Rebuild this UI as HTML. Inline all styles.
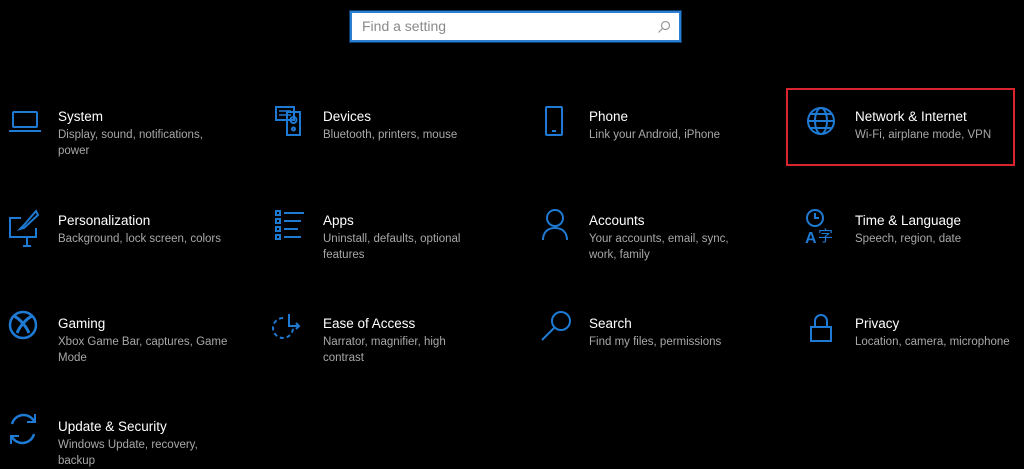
<!DOCTYPE html>
<html><head><meta charset="utf-8"><style>
*{margin:0;padding:0;box-sizing:border-box}
body{width:1024px;height:466px;background:#000;position:relative;overflow:hidden;font-family:"Segoe UI","Liberation Sans",sans-serif}
.search{position:absolute;left:350px;top:11px;width:331px;height:31px;background:#fff;border:2px solid #2b7fd0;box-shadow:0 0 0 1px #0b3a66}
.search span{position:absolute;left:10px;top:5px;font-size:14px;color:#8a8a8a}
.search svg{position:absolute;right:8px;top:7px}
.t{position:absolute;color:#fff;font-size:13.5px;line-height:18px;white-space:nowrap}
.s{position:absolute;color:#a8a8a8;font-size:11.5px;line-height:16px;width:190px}
.red{position:absolute;left:786px;top:88px;width:229px;height:78px;border:2px solid #d9262e}
</style></head><body>
<div class="search"><span>Find a setting</span>
<svg width="14" height="14" viewBox="0 0 14 14" fill="none" stroke="#999" stroke-width="1.2"><circle cx="8.5" cy="5.5" r="4"/><path d="M5.5 8.5L1.5 12.5"/></svg></div>

<svg width="1024" height="466" style="position:absolute;left:0;top:0" fill="none" stroke="#1f7ad4" stroke-width="2">
<rect x="13" y="112" width="24" height="15" rx="1"/><path d="M9 131h32"/>
<rect x="276" y="107" width="18" height="13"/><path d="M279 111h12M279 115h12" stroke-width="1.5"/><rect x="287" y="112" width="13" height="23"/><circle cx="293.5" cy="120" r="3"/><circle cx="293.5" cy="129" r="1.5"/>
<rect x="546" y="107" width="16" height="28" rx="1"/><path d="M552 131h4"/>
<circle cx="821" cy="121" r="13"/><ellipse cx="821" cy="121" rx="6" ry="13"/><path d="M808 121h26M810 114h22M810 128h22"/>
<path d="M21 218H10v19h26v-9"/><path d="M23 246h8M27 237v9"/><path d="M36 211l-12 14-4 4 4-1 14-13z"/>
<rect x="276" y="211" width="4" height="4"/><rect x="276" y="219" width="4" height="4"/><rect x="276" y="227" width="4" height="4"/><rect x="276" y="235" width="4" height="4"/>
<path d="M284 213h20M284 221h17M284 229h14M284 237h17"/>
<circle cx="555" cy="218" r="8"/><path d="M543 240c0-8 5-12 12-12s12 4 12 12"/>
<circle cx="815" cy="218" r="8"/><path d="M815 213v5h4"/>
<text x="805" y="243" fill="#1f7ad4" stroke="none" font-size="16" font-family="Liberation Sans" font-weight="bold">A</text>
<text x="818" y="241" fill="#1f7ad4" stroke="none" font-size="15" font-family="Noto Sans CJK SC">字</text>
<circle cx="23" cy="325" r="13" stroke-width="2.5"/><path d="M14 316c6 3 12 10 15 17M32 316c-6 3-12 10-15 17" stroke-width="3"/>
<path d="M283 318a10 10 0 1 0 10 10" stroke-dasharray="4 3"/><path d="M289 314v12h10M296 323l3 3-3 3"/>
<circle cx="561" cy="321" r="9"/><path d="M554 328l-12 12"/>
<rect x="811" y="327" width="20" height="14"/><path d="M815 327v-6a6 6 0 0 1 12 0v6"/>
<path d="M12 424a12 12 0 0 1 22-3M34 434a12 12 0 0 1-22 3" stroke-width="2.5"/><path d="M35 414v8h-8M11 444v-8h8" stroke-width="2"/>
</svg>

<div class="t" style="left:58px;top:108px">System</div><div class="s" style="left:58px;top:127px;width:160px">Display, sound, notifications, power</div>
<div class="t" style="left:323px;top:108px">Devices</div><div class="s" style="left:323px;top:127px">Bluetooth, printers, mouse</div>
<div class="t" style="left:589px;top:108px">Phone</div><div class="s" style="left:589px;top:127px">Link your Android, iPhone</div>
<div class="t" style="left:855px;top:108px">Network &amp; Internet</div><div class="s" style="left:855px;top:127px">Wi-Fi, airplane mode, VPN</div>

<div class="t" style="left:58px;top:212px">Personalization</div><div class="s" style="left:58px;top:231px">Background, lock screen, colors</div>
<div class="t" style="left:323px;top:212px">Apps</div><div class="s" style="left:323px;top:231px;width:160px">Uninstall, defaults, optional features</div>
<div class="t" style="left:589px;top:212px">Accounts</div><div class="s" style="left:589px;top:231px;width:150px">Your accounts, email, sync, work, family</div>
<div class="t" style="left:855px;top:212px">Time &amp; Language</div><div class="s" style="left:855px;top:231px">Speech, region, date</div>

<div class="t" style="left:58px;top:315px">Gaming</div><div class="s" style="left:58px;top:334px;width:180px">Xbox Game Bar, captures, Game Mode</div>
<div class="t" style="left:323px;top:315px">Ease of Access</div><div class="s" style="left:323px;top:334px;width:140px">Narrator, magnifier, high contrast</div>
<div class="t" style="left:589px;top:315px">Search</div><div class="s" style="left:589px;top:334px">Find my files, permissions</div>
<div class="t" style="left:855px;top:315px">Privacy</div><div class="s" style="left:855px;top:334px;width:170px">Location, camera, microphone</div>

<div class="t" style="left:58px;top:418px">Update &amp; Security</div><div class="s" style="left:58px;top:437px;width:160px">Windows Update, recovery, backup</div>

<div class="red"></div>
</body></html>
